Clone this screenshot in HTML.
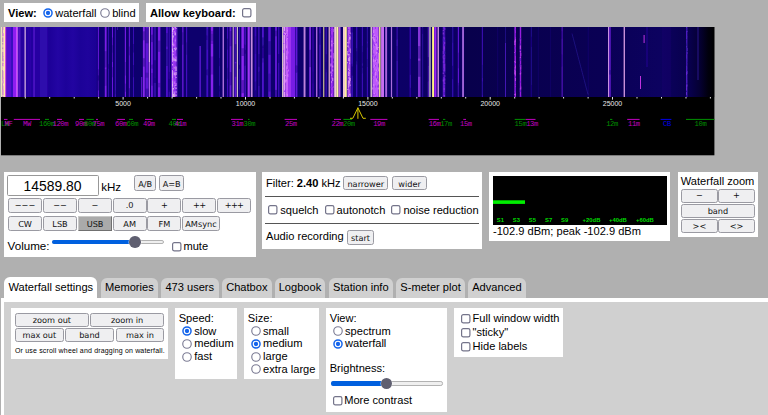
<!DOCTYPE html>
<html><head><meta charset="utf-8"><title>WebSDR</title>
<style>
html,body{margin:0;padding:0;}
body{width:768px;height:415px;overflow:hidden;background:#b0b0b0;font-family:"Liberation Sans",Arial,sans-serif;font-size:11.1px;color:#000;position:relative;}
.a{position:absolute;white-space:nowrap;}
.w{position:absolute;background:#fff;}
.t{position:absolute;white-space:nowrap;line-height:13px;height:13px;}
.btn{position:absolute;box-sizing:border-box;padding-top:0.8px;border:0.7px solid #9a9aa2;border-radius:2.4px;background:#efeff1;font-family:"DejaVu Sans","Liberation Sans",sans-serif;font-size:8.2px;text-rendering:geometricPrecision;color:#111;text-align:center;white-space:nowrap;}
.btn.on{background:#aaaaaa;border-radius:0;border-color:#c8c8c8 #707070 #707070 #c8c8c8;}
.cb{position:absolute;box-sizing:border-box;width:9.2px;height:9.2px;border:0.8px solid #767676;border-radius:1.6px;background:#fff;}
.rb{position:absolute;box-sizing:border-box;width:9.6px;height:9.6px;margin:-0.1px;border:1.05px solid #80808f;border-radius:50%;background:#fff;}
.rb.on{border:1.55px solid #1464eb;}
.rb.on::after{content:"";position:absolute;left:1.0px;top:1.0px;width:4.5px;height:4.5px;border-radius:50%;background:#1464eb;}
.hr{position:absolute;height:1.3px;background:#555;}
.trk{position:absolute;box-sizing:border-box;height:4.4px;border-radius:2.2px;background:#efefef;border:0.7px solid #b2b2b2;}
.trkf{position:absolute;height:4.4px;border-radius:2.2px;background:#0060df;}
.thumb{position:absolute;width:11.6px;height:11.6px;border-radius:50%;background:#5f5f70;box-shadow:0 0 0 0.5px rgba(255,255,255,.7);}
.tab{position:absolute;top:277.5px;height:20px;box-sizing:border-box;background:#d0d0d0;border-radius:6px 6px 0 0;line-height:19.5px;text-align:center;white-space:nowrap;}
.tab.on{background:#fff;top:277px;height:22px;line-height:20.5px;}
svg text.fl{font-family:"Liberation Sans",sans-serif;font-size:7px;fill:#e8e8e8;}
svg text.bl{font-family:"Liberation Mono",monospace;font-size:7.2px;letter-spacing:-0.42px;}
svg text.sm{font-family:"Liberation Sans",sans-serif;font-size:5.9px;font-weight:bold;fill:#00dc00;}
</style></head>
<body>
<!-- top bar -->
<div class="w" style="left:4px;top:3px;width:135px;height:19px"></div>
<div class="t" style="left:8px;top:7px;font-weight:bold">View:</div>
<svg width="10" height="10" viewBox="0 0 10 10" style="position:absolute;left:43.2px;top:8.1px"><circle cx="5" cy="5" r="4.05" fill="#fff" stroke="#1464eb" stroke-width="1.5"/><circle cx="5" cy="5" r="2.15" fill="#1464eb"/></svg>
<div class="t" style="left:55.2px;top:7px">waterfall</div>
<svg width="10" height="10" viewBox="0 0 10 10" style="position:absolute;left:100.0px;top:8.1px"><circle cx="5" cy="5" r="4.25" fill="#fff" stroke="#7c7c94" stroke-width="1.15"/></svg>
<div class="t" style="left:112.2px;top:7px">blind</div>
<div class="w" style="left:145.8px;top:3px;width:110.5px;height:19px"></div>
<div class="t" style="left:150px;top:7px;font-weight:bold">Allow keyboard:</div>
<svg width="10" height="10" viewBox="0 0 10 10" style="position:absolute;left:242.05px;top:8.25px"><rect x="0.6" y="0.6" width="8.3" height="8.3" rx="1.7" fill="#fff" stroke="#74748a" stroke-width="1.2"/></svg>

<svg width="768" height="70" viewBox="0 27 768 70" style="position:absolute;left:0;top:27px">
<defs><linearGradient id="bg" x1="1" x2="714.5" y1="0" y2="0" gradientUnits="userSpaceOnUse">
<stop offset="0.0000" stop-color="#2402a2"/>
<stop offset="0.0477" stop-color="#2402a2"/>
<stop offset="0.0687" stop-color="#1d0199"/>
<stop offset="0.0799" stop-color="#2305a3"/>
<stop offset="0.0911" stop-color="#1d029a"/>
<stop offset="0.1009" stop-color="#2204a1"/>
<stop offset="0.1107" stop-color="#1c0298"/>
<stop offset="0.1219" stop-color="#1f039c"/>
<stop offset="0.1331" stop-color="#1b0195"/>
<stop offset="0.1374" stop-color="#0d006e"/>
<stop offset="0.4191" stop-color="#0d006c"/>
<stop offset="0.5592" stop-color="#0c0066"/>
<stop offset="0.6461" stop-color="#0b0060"/>
<stop offset="0.6517" stop-color="#08004c"/>
<stop offset="0.8395" stop-color="#0a0054"/>
<stop offset="0.9236" stop-color="#0c0260"/>
<stop offset="0.9657" stop-color="#08004c"/>
<stop offset="0.9797" stop-color="#050032"/>
<stop offset="0.9909" stop-color="#01000e"/>
<stop offset="1.0000" stop-color="#000000"/>
</linearGradient><filter id="bl" x="0" y="0" width="1" height="1" filterUnits="objectBoundingBox"><feGaussianBlur stdDeviation="0.42 0.3"/></filter><clipPath id="cp"><rect x="1" y="27" width="713.5" height="70"/></clipPath></defs>
<rect x="1.0" y="27" width="713.5" height="70" fill="url(#bg)"/>
<g clip-path="url(#cp)"><g filter="url(#bl)">
<rect x="-5" y="20" width="6" height="84" fill="#b0b0b0"/>
<rect x="1.0" y="24" width="1.5" height="76" fill="#f0e6be"/>
<rect x="2.5" y="24" width="1.5" height="76" fill="#f0b4c8"/>
<rect x="4.0" y="24" width="1.0" height="76" fill="#fff0a0"/>
<rect x="5.0" y="24" width="1.5" height="76" fill="#c850dc"/>
<rect x="6.5" y="24" width="4.5" height="76" fill="#550fd2"/>
<rect x="11.0" y="24" width="2.0" height="76" fill="#3907be"/>
<rect x="13.0" y="24" width="3.0" height="76" fill="#8e1ef0"/>
<rect x="16.0" y="24" width="1.6" height="76" fill="#c846ff"/>
<rect x="17.6" y="24" width="0.5" height="76" fill="#e096f0"/>
<rect x="18.1" y="24" width="1.4" height="76" fill="#4c07be"/>
<rect x="19.5" y="24" width="1.0" height="76" fill="#721edc"/>
<rect x="20.5" y="24" width="4.0" height="76" fill="#2800a0"/>
<rect x="24.5" y="24" width="1.3" height="76" fill="#d2aadc"/>
<rect x="26.0" y="24" width="7.5" height="76" fill="#23009e"/>
<rect x="27.8" y="24" width="0.6" height="76" fill="#3907b4"/>
<rect x="29.8" y="24" width="0.6" height="76" fill="#3907b4"/>
<rect x="33.5" y="24" width="1.0" height="76" fill="#681edc"/>
<rect x="35.0" y="24" width="13.0" height="76" fill="#2604a2"/>
<rect x="40.0" y="24" width="7.0" height="76" fill="#2f07ac"/>
<rect x="97.9" y="24" width="1.0" height="76" fill="#6816dc"/>
<rect x="104.8" y="24" width="1.8" height="76" fill="#7b1ee6"/>
<rect x="108.0" y="24" width="1.0" height="76" fill="#2f07aa"/>
<rect x="112.0" y="24" width="1.0" height="76" fill="#6816dc"/>
<rect x="114.8" y="24" width="1.0" height="76" fill="#420fbe"/>
<rect x="117.0" y="24" width="0.6" height="6" fill="#5516c8"/>
<rect x="124.8" y="24" width="1.2" height="76" fill="#721ae1"/>
<rect x="128.8" y="24" width="1.2" height="76" fill="#5f16d2"/>
<rect x="133.0" y="24" width="1.0" height="76" fill="#390bb4"/>
<rect x="141.2" y="77" width="1.0" height="23" fill="#681ad7"/>
<rect x="142.9" y="24" width="1.9" height="76" fill="#8525eb"/>
<rect x="145.4" y="24" width="3.1" height="76" fill="#5f12d7"/>
<rect x="148.8" y="24" width="1.2" height="38" fill="#dcaae6"/>
<rect x="148.8" y="62" width="1.2" height="38" fill="#aa64e6"/>
<rect x="151.0" y="24" width="1.9" height="76" fill="#6816d7"/>
<rect x="153.5" y="24" width="2.5" height="76" fill="#2d08a0"/>
<rect x="157.9" y="24" width="2.5" height="76" fill="#7b1ee6"/>
<rect x="166.0" y="24" width="1.9" height="76" fill="#4c0fc8"/>
<rect x="168.5" y="24" width="1.3" height="76" fill="#390bb4"/>
<rect x="171.2" y="24" width="0.8" height="76" fill="#681ad7"/>
<rect x="172.0" y="24" width="4.6" height="76" fill="#9f3af2"/>
<rect x="176.6" y="24" width="0.8" height="76" fill="#681ad7"/>
<rect x="172.0" y="24" width="0.8" height="76" fill="#e1beeb"/>
<rect x="182.2" y="24" width="1.3" height="76" fill="#6816dc"/>
<rect x="186.0" y="24" width="1.2" height="76" fill="#420fbe"/>
<rect x="199.5" y="46" width="1.3" height="54" fill="#5f16d7"/>
<rect x="206.4" y="24" width="1.8" height="76" fill="#420fc3"/>
<rect x="210.8" y="24" width="2.4" height="76" fill="#8521eb"/>
<rect x="219.0" y="24" width="1.0" height="76" fill="#2d0aa5"/>
<rect x="222.6" y="24" width="1.3" height="76" fill="#be78e6"/>
<rect x="227.0" y="24" width="1.2" height="76" fill="#420fbe"/>
<rect x="229.5" y="24" width="1.9" height="76" fill="#6816dc"/>
<rect x="232.6" y="24" width="1.3" height="76" fill="#be96c8"/>
<rect x="234.5" y="24" width="1.9" height="76" fill="#5f16d7"/>
<rect x="236.8" y="24" width="1.2" height="76" fill="#cdb9c3"/>
<rect x="238.8" y="24" width="1.2" height="76" fill="#2f09aa"/>
<rect x="241.4" y="24" width="2.5" height="76" fill="#8e25f0"/>
<rect x="244.5" y="24" width="1.3" height="76" fill="#4c0fc8"/>
<rect x="247.6" y="24" width="2.2" height="76" fill="#a134f5"/>
<rect x="250.8" y="24" width="1.8" height="76" fill="#c88cdc"/>
<rect x="254.5" y="24" width="1.9" height="76" fill="#390bb9"/>
<rect x="258.2" y="24" width="1.3" height="76" fill="#420fbe"/>
<rect x="262.0" y="24" width="1.9" height="76" fill="#4c12c8"/>
<rect x="268.2" y="24" width="2.6" height="76" fill="#5512cd"/>
<rect x="275.0" y="24" width="2.0" height="76" fill="#5f16d2"/>
<rect x="278.0" y="24" width="1.5" height="76" fill="#340aaf"/>
<rect x="282.0" y="24" width="1.3" height="76" fill="#d2beb9"/>
<rect x="283.3" y="24" width="2.2" height="76" fill="#e196fa"/>
<rect x="285.5" y="24" width="2.5" height="76" fill="#c35ffa"/>
<rect x="288.0" y="24" width="3.0" height="76" fill="#9c30f0"/>
<rect x="291.0" y="24" width="4.0" height="76" fill="#761ce4"/>
<rect x="295.5" y="24" width="1.9" height="76" fill="#5f16d7"/>
<rect x="303.6" y="24" width="1.9" height="76" fill="#be82dc"/>
<rect x="309.2" y="24" width="1.8" height="76" fill="#7b29dc"/>
<rect x="312.4" y="24" width="1.2" height="76" fill="#390bb4"/>
<rect x="316.0" y="24" width="1.4" height="76" fill="#aa64dc"/>
<rect x="319.2" y="24" width="1.6" height="76" fill="#420fbe"/>
<rect x="323.2" y="24" width="1.1" height="76" fill="#e1cd96"/>
<rect x="325.5" y="24" width="1.3" height="76" fill="#390bb4"/>
<rect x="328.6" y="24" width="1.3" height="76" fill="#dcaac8"/>
<rect x="330.5" y="24" width="3.1" height="76" fill="#a134f0"/>
<rect x="334.2" y="24" width="2.1" height="76" fill="#f0c8d7"/>
<rect x="336.3" y="24" width="2.2" height="76" fill="#fff8a0"/>
<rect x="338.6" y="24" width="1.9" height="76" fill="#b45ae6"/>
<rect x="343.0" y="24" width="2.0" height="76" fill="#f0c8cd"/>
<rect x="345.0" y="24" width="1.8" height="76" fill="#ffeea0"/>
<rect x="347.4" y="24" width="3.2" height="76" fill="#b450f0"/>
<rect x="351.2" y="24" width="1.8" height="76" fill="#390bb4"/>
<rect x="356.0" y="24" width="1.4" height="76" fill="#390fb4"/>
<rect x="361.8" y="24" width="1.2" height="76" fill="#390db4"/>
<rect x="366.8" y="24" width="1.2" height="76" fill="#390db4"/>
<rect x="370.5" y="24" width="1.5" height="76" fill="#cdb9c3"/>
<rect x="372.4" y="24" width="6.3" height="76" fill="#be5afa"/>
<rect x="379.0" y="24" width="1.6" height="76" fill="#ebd796"/>
<rect x="381.1" y="24" width="2.9" height="76" fill="#c86ef0"/>
<rect x="385.2" y="24" width="1.9" height="76" fill="#aa64dc"/>
<rect x="390.9" y="24" width="1.2" height="76" fill="#aa6edc"/>
<rect x="396.5" y="24" width="1.3" height="76" fill="#420fbe"/>
<rect x="409.6" y="24" width="1.3" height="76" fill="#390bb4"/>
<rect x="418.0" y="24" width="2.5" height="76" fill="#8534d7"/>
<rect x="422.0" y="24" width="1.2" height="76" fill="#280a96"/>
<rect x="427.8" y="24" width="1.0" height="76" fill="#5f1ec8"/>
<rect x="429.0" y="24" width="1.9" height="76" fill="#9b91af"/>
<rect x="432.1" y="24" width="1.9" height="76" fill="#fff582"/>
<rect x="434.2" y="24" width="2.3" height="76" fill="#9825f0"/>
<rect x="437.5" y="24" width="1.5" height="76" fill="#c882dc"/>
<rect x="442.8" y="24" width="2.4" height="76" fill="#681ed2"/>
<rect x="452.0" y="24" width="1.4" height="76" fill="#2f0baa"/>
<rect x="457.8" y="24" width="1.2" height="76" fill="#5f16d2"/>
<rect x="462.1" y="24" width="1.9" height="76" fill="#a064d7"/>
<rect x="481.8" y="24" width="1.1" height="76" fill="#3a0fb6"/>
<rect x="497.4" y="24" width="0.8" height="76" fill="#180670"/>
<rect x="505.0" y="24" width="1.0" height="19" fill="#1e0a80"/>
<rect x="505.0" y="43" width="1.0" height="57" fill="#4212b4"/>
<rect x="514.4" y="24" width="1.6" height="76" fill="#981ee0"/>
<rect x="519.8" y="24" width="1.4" height="76" fill="#981ee0"/>
<rect x="530.8" y="24" width="1.0" height="76" fill="#240e92"/>
<rect x="537.8" y="24" width="0.8" height="76" fill="#16066c"/>
<rect x="550.0" y="24" width="0.8" height="76" fill="#140568"/>
<rect x="561.6" y="24" width="1.1" height="76" fill="#5512c0"/>
<rect x="587.8" y="24" width="0.7" height="76" fill="#180874"/>
<rect x="608.0" y="24" width="1.3" height="76" fill="#c890e0"/>
<rect x="609.3" y="24" width="1.4" height="76" fill="#6418d0"/>
<rect x="623.6" y="24" width="1.4" height="76" fill="#c890d8"/>
<rect x="643.6" y="35" width="1.0" height="8" fill="#c030e0"/>
<rect x="640.0" y="76" width="1.0" height="13" fill="#c030e0"/>
<rect x="646.6" y="24" width="0.8" height="43" fill="#2a10a0"/>
<rect x="662.0" y="24" width="9.0" height="76" fill="#14056c" opacity="0.5"/>
<rect x="686.0" y="24" width="1.4" height="76" fill="#4c1ec0"/>
<rect x="697.6" y="24" width="0.8" height="56" fill="#3018a0"/>
<rect x="97.8" y="75.2" width="1.2" height="15.1" fill="#0e0070" opacity="0.45"/>
<rect x="97.8" y="69.4" width="1.2" height="11.4" fill="#0e0070" opacity="0.35"/>
<rect x="104.7" y="69.2" width="2.0" height="16.6" fill="#0e0070" opacity="0.25"/>
<rect x="104.7" y="51.2" width="2.0" height="16.2" fill="#0e0070" opacity="0.35"/>
<rect x="107.9" y="64.3" width="1.2" height="4.2" fill="#0e0070" opacity="0.25"/>
<rect x="111.9" y="45.2" width="1.2" height="16.8" fill="#0e0070" opacity="0.35"/>
<rect x="111.9" y="37.4" width="1.2" height="15.2" fill="#0e0070" opacity="0.25"/>
<rect x="111.9" y="67.2" width="1.2" height="10.2" fill="#0e0070" opacity="0.25"/>
<rect x="114.7" y="90.2" width="1.2" height="4.1" fill="#0e0070" opacity="0.25"/>
<rect x="124.7" y="83.7" width="1.4" height="8.1" fill="#0e0070" opacity="0.25"/>
<rect x="124.7" y="62.0" width="1.4" height="13.5" fill="#0e0070" opacity="0.25"/>
<rect x="128.7" y="88.2" width="1.4" height="13.7" fill="#0e0070" opacity="0.35"/>
<rect x="128.7" y="46.4" width="1.4" height="9.1" fill="#0e0070" opacity="0.25"/>
<rect x="132.9" y="44.1" width="1.2" height="8.6" fill="#0e0070" opacity="0.45"/>
<rect x="132.9" y="65.1" width="1.2" height="12.3" fill="#0e0070" opacity="0.45"/>
<rect x="142.8" y="31.3" width="2.1" height="9.0" fill="#0e0070" opacity="0.35"/>
<rect x="142.8" y="58.2" width="2.1" height="8.4" fill="#0e0070" opacity="0.35"/>
<rect x="145.3" y="72.8" width="3.3" height="4.8" fill="#0e0070" opacity="0.25"/>
<rect x="145.3" y="88.7" width="3.3" height="9.0" fill="#0e0070" opacity="0.35"/>
<rect x="145.3" y="28.2" width="3.3" height="15.0" fill="#0e0070" opacity="0.35"/>
<rect x="150.9" y="64.6" width="2.1" height="4.1" fill="#0e0070" opacity="0.25"/>
<rect x="150.9" y="73.0" width="2.1" height="12.7" fill="#0e0070" opacity="0.25"/>
<rect x="150.9" y="34.7" width="2.1" height="7.4" fill="#0e0070" opacity="0.35"/>
<rect x="153.4" y="60.3" width="2.7" height="16.5" fill="#0e0070" opacity="0.35"/>
<rect x="153.4" y="77.4" width="2.7" height="5.5" fill="#0e0070" opacity="0.45"/>
<rect x="157.8" y="82.9" width="2.7" height="4.5" fill="#0e0070" opacity="0.25"/>
<rect x="157.8" y="40.6" width="2.7" height="11.2" fill="#0e0070" opacity="0.35"/>
<rect x="165.9" y="49.1" width="2.1" height="16.9" fill="#0e0070" opacity="0.45"/>
<rect x="165.9" y="33.0" width="2.1" height="13.6" fill="#0e0070" opacity="0.35"/>
<rect x="168.4" y="78.9" width="1.5" height="12.8" fill="#0e0070" opacity="0.45"/>
<rect x="168.4" y="71.8" width="1.5" height="18.0" fill="#0e0070" opacity="0.25"/>
<rect x="182.1" y="32.3" width="1.5" height="12.4" fill="#0e0070" opacity="0.35"/>
<rect x="185.9" y="42.4" width="1.4" height="12.3" fill="#0e0070" opacity="0.35"/>
<rect x="206.3" y="69.3" width="2.0" height="6.0" fill="#0e0070" opacity="0.45"/>
<rect x="206.3" y="29.1" width="2.0" height="10.9" fill="#0e0070" opacity="0.25"/>
<rect x="206.3" y="35.5" width="2.0" height="14.2" fill="#0e0070" opacity="0.25"/>
<rect x="210.7" y="33.9" width="2.6" height="10.1" fill="#0e0070" opacity="0.25"/>
<rect x="210.7" y="30.8" width="2.6" height="9.9" fill="#0e0070" opacity="0.25"/>
<rect x="210.7" y="56.5" width="2.6" height="18.0" fill="#0e0070" opacity="0.25"/>
<rect x="218.9" y="89.4" width="1.2" height="13.6" fill="#0e0070" opacity="0.35"/>
<rect x="218.9" y="58.1" width="1.2" height="8.1" fill="#0e0070" opacity="0.35"/>
<rect x="218.9" y="85.6" width="1.2" height="5.6" fill="#0e0070" opacity="0.45"/>
<rect x="226.9" y="67.8" width="1.4" height="11.0" fill="#0e0070" opacity="0.35"/>
<rect x="226.9" y="38.7" width="1.4" height="10.9" fill="#0e0070" opacity="0.45"/>
<rect x="229.4" y="31.1" width="2.1" height="15.1" fill="#0e0070" opacity="0.35"/>
<rect x="229.4" y="72.1" width="2.1" height="13.3" fill="#0e0070" opacity="0.35"/>
<rect x="234.4" y="63.4" width="2.1" height="13.4" fill="#0e0070" opacity="0.35"/>
<rect x="234.4" y="44.2" width="2.1" height="17.7" fill="#0e0070" opacity="0.45"/>
<rect x="238.7" y="89.2" width="1.4" height="8.8" fill="#0e0070" opacity="0.25"/>
<rect x="238.7" y="64.7" width="1.4" height="4.2" fill="#0e0070" opacity="0.45"/>
<rect x="241.3" y="48.2" width="2.7" height="7.8" fill="#0e0070" opacity="0.35"/>
<rect x="241.3" y="80.1" width="2.7" height="13.1" fill="#0e0070" opacity="0.35"/>
<rect x="244.4" y="44.8" width="1.5" height="8.8" fill="#0e0070" opacity="0.35"/>
<rect x="244.4" y="49.8" width="1.5" height="15.8" fill="#0e0070" opacity="0.45"/>
<rect x="254.4" y="90.4" width="2.1" height="17.4" fill="#0e0070" opacity="0.45"/>
<rect x="254.4" y="36.2" width="2.1" height="17.7" fill="#0e0070" opacity="0.25"/>
<rect x="254.4" y="81.4" width="2.1" height="17.1" fill="#0e0070" opacity="0.35"/>
<rect x="258.1" y="71.9" width="1.5" height="14.1" fill="#0e0070" opacity="0.45"/>
<rect x="258.1" y="54.1" width="1.5" height="12.6" fill="#0e0070" opacity="0.45"/>
<rect x="261.9" y="46.7" width="2.1" height="11.7" fill="#0e0070" opacity="0.45"/>
<rect x="261.9" y="44.6" width="2.1" height="17.9" fill="#0e0070" opacity="0.25"/>
<rect x="261.9" y="37.4" width="2.1" height="10.2" fill="#0e0070" opacity="0.45"/>
<rect x="268.1" y="41.2" width="2.8" height="13.6" fill="#0e0070" opacity="0.45"/>
<rect x="268.1" y="73.7" width="2.8" height="17.8" fill="#0e0070" opacity="0.25"/>
<rect x="274.9" y="30.5" width="2.2" height="5.9" fill="#0e0070" opacity="0.35"/>
<rect x="274.9" y="89.9" width="2.2" height="10.8" fill="#0e0070" opacity="0.45"/>
<rect x="277.9" y="54.0" width="1.7" height="8.9" fill="#0e0070" opacity="0.45"/>
<rect x="295.4" y="65.4" width="2.1" height="7.3" fill="#0e0070" opacity="0.35"/>
<rect x="309.1" y="49.8" width="2.0" height="17.3" fill="#0e0070" opacity="0.35"/>
<rect x="312.3" y="71.8" width="1.4" height="11.7" fill="#0e0070" opacity="0.25"/>
<rect x="319.1" y="33.2" width="1.8" height="11.6" fill="#0e0070" opacity="0.35"/>
<rect x="319.1" y="88.8" width="1.8" height="8.1" fill="#0e0070" opacity="0.35"/>
<rect x="325.4" y="54.2" width="1.5" height="15.4" fill="#0e0070" opacity="0.45"/>
<rect x="325.4" y="62.0" width="1.5" height="10.5" fill="#0e0070" opacity="0.25"/>
<rect x="351.1" y="63.7" width="2.0" height="17.4" fill="#0e0070" opacity="0.25"/>
<rect x="351.1" y="66.6" width="2.0" height="8.9" fill="#0e0070" opacity="0.45"/>
<rect x="351.1" y="27.1" width="2.0" height="5.5" fill="#0e0070" opacity="0.45"/>
<rect x="355.9" y="48.2" width="1.6" height="16.3" fill="#0e0070" opacity="0.45"/>
<rect x="355.9" y="51.4" width="1.6" height="10.0" fill="#0e0070" opacity="0.25"/>
<rect x="361.7" y="45.9" width="1.4" height="17.6" fill="#0e0070" opacity="0.35"/>
<rect x="361.7" y="52.0" width="1.4" height="16.0" fill="#0e0070" opacity="0.25"/>
<rect x="361.7" y="65.7" width="1.4" height="7.6" fill="#0e0070" opacity="0.35"/>
<rect x="366.7" y="43.3" width="1.4" height="4.3" fill="#0e0070" opacity="0.35"/>
<rect x="366.7" y="59.0" width="1.4" height="8.0" fill="#0e0070" opacity="0.35"/>
<rect x="366.7" y="28.5" width="1.4" height="13.2" fill="#0e0070" opacity="0.35"/>
<rect x="396.4" y="46.1" width="1.5" height="14.9" fill="#0e0070" opacity="0.35"/>
<rect x="396.4" y="27.9" width="1.5" height="11.5" fill="#0e0070" opacity="0.35"/>
<rect x="409.5" y="87.8" width="1.5" height="14.9" fill="#0e0070" opacity="0.25"/>
<rect x="409.5" y="58.9" width="1.5" height="15.8" fill="#0e0070" opacity="0.45"/>
<rect x="417.9" y="46.1" width="2.7" height="12.5" fill="#0e0070" opacity="0.35"/>
<rect x="417.9" y="60.7" width="2.7" height="16.1" fill="#0e0070" opacity="0.45"/>
<rect x="421.9" y="28.1" width="1.4" height="5.8" fill="#0e0070" opacity="0.35"/>
<rect x="427.7" y="66.9" width="1.2" height="14.2" fill="#0e0070" opacity="0.25"/>
<rect x="427.7" y="57.2" width="1.2" height="9.1" fill="#0e0070" opacity="0.45"/>
<rect x="442.7" y="29.4" width="2.6" height="7.5" fill="#0e0070" opacity="0.35"/>
<rect x="442.7" y="71.6" width="2.6" height="5.5" fill="#0e0070" opacity="0.45"/>
<rect x="451.9" y="27.9" width="1.6" height="14.9" fill="#0e0070" opacity="0.35"/>
<rect x="451.9" y="65.7" width="1.6" height="13.6" fill="#0e0070" opacity="0.45"/>
<rect x="457.7" y="82.8" width="1.4" height="15.8" fill="#0e0070" opacity="0.35"/>
<rect x="457.7" y="52.5" width="1.4" height="15.9" fill="#0e0070" opacity="0.25"/>
<rect x="457.7" y="85.4" width="1.4" height="10.5" fill="#0e0070" opacity="0.25"/>
<rect x="481.7" y="81.4" width="1.3" height="13.7" fill="#0e0070" opacity="0.35"/>
<rect x="481.7" y="64.8" width="1.3" height="13.1" fill="#0e0070" opacity="0.35"/>
<rect x="530.7" y="36.3" width="1.2" height="10.7" fill="#0e0070" opacity="0.45"/>
<rect x="530.7" y="84.8" width="1.2" height="17.6" fill="#0e0070" opacity="0.45"/>
<rect x="561.5" y="54.7" width="1.3" height="11.6" fill="#0e0070" opacity="0.25"/>
<rect x="561.5" y="31.4" width="1.3" height="7.2" fill="#0e0070" opacity="0.25"/>
<rect x="609.2" y="70.1" width="1.6" height="4.4" fill="#0e0070" opacity="0.45"/>
<rect x="685.9" y="90.6" width="1.6" height="18.0" fill="#0e0070" opacity="0.45"/>
<rect x="685.9" y="58.6" width="1.6" height="5.7" fill="#0e0070" opacity="0.25"/>
<rect x="685.9" y="41.3" width="1.6" height="13.0" fill="#0e0070" opacity="0.25"/>
<rect x="2.5" y="33.0" width="0.9" height="1.5" fill="#e18cd7"/>
<rect x="2.5" y="34.5" width="0.9" height="1.5" fill="#e18cd7"/>
<rect x="2.5" y="36.0" width="0.9" height="1.5" fill="#fff0be"/>
<rect x="2.5" y="42.0" width="0.9" height="1.0" fill="#fff0be"/>
<rect x="2.5" y="44.5" width="0.9" height="3.0" fill="#fff0be"/>
<rect x="2.5" y="49.0" width="0.9" height="3.0" fill="#fff0be"/>
<rect x="2.5" y="61.0" width="0.9" height="2.0" fill="#fff0be"/>
<rect x="2.5" y="63.0" width="0.9" height="3.0" fill="#e18cd7"/>
<rect x="2.5" y="66.0" width="0.9" height="3.0" fill="#fff0be"/>
<rect x="2.5" y="69.0" width="0.9" height="1.0" fill="#fff0be"/>
<rect x="2.5" y="77.5" width="0.9" height="2.0" fill="#e18cd7"/>
<rect x="2.5" y="79.5" width="0.9" height="2.0" fill="#e18cd7"/>
<rect x="2.5" y="81.5" width="0.9" height="1.0" fill="#fff0be"/>
<rect x="2.5" y="82.5" width="0.9" height="1.0" fill="#e18cd7"/>
<rect x="2.5" y="89.5" width="0.9" height="3.0" fill="#e18cd7"/>
<rect x="2.5" y="92.5" width="0.9" height="1.5" fill="#e18cd7"/>
<rect x="2.5" y="94.0" width="0.9" height="1.0" fill="#e18cd7"/>
<rect x="2.5" y="95.0" width="0.9" height="1.0" fill="#fff0be"/>
<rect x="3.4" y="30.0" width="0.6" height="3.0" fill="#fff0be"/>
<rect x="3.4" y="34.5" width="0.6" height="1.5" fill="#e18cd7"/>
<rect x="3.4" y="56.0" width="0.6" height="1.0" fill="#e18cd7"/>
<rect x="3.4" y="58.5" width="0.6" height="3.0" fill="#e18cd7"/>
<rect x="3.4" y="63.5" width="0.6" height="1.0" fill="#e18cd7"/>
<rect x="3.4" y="64.5" width="0.6" height="1.0" fill="#fff0be"/>
<rect x="3.4" y="65.5" width="0.6" height="1.0" fill="#e18cd7"/>
<rect x="3.4" y="66.5" width="0.6" height="3.0" fill="#fff0be"/>
<rect x="3.4" y="69.5" width="0.6" height="1.5" fill="#fff0be"/>
<rect x="3.4" y="79.5" width="0.6" height="1.0" fill="#fff0be"/>
<rect x="3.4" y="80.5" width="0.6" height="3.0" fill="#e18cd7"/>
<rect x="3.4" y="83.5" width="0.6" height="2.0" fill="#fff0be"/>
<rect x="172.0" y="29.0" width="0.9" height="3.0" fill="#e4bef0"/>
<rect x="172.0" y="32.0" width="0.9" height="1.0" fill="#cd78fa"/>
<rect x="172.0" y="44.0" width="0.9" height="1.0" fill="#e4bef0"/>
<rect x="172.0" y="45.0" width="0.9" height="3.0" fill="#cd78fa"/>
<rect x="172.0" y="49.0" width="0.9" height="3.0" fill="#e4bef0"/>
<rect x="172.0" y="52.0" width="0.9" height="2.0" fill="#cd78fa"/>
<rect x="172.0" y="60.5" width="0.9" height="1.5" fill="#cd78fa"/>
<rect x="172.0" y="62.0" width="0.9" height="2.0" fill="#7b25e4"/>
<rect x="172.0" y="65.5" width="0.9" height="3.0" fill="#7b25e4"/>
<rect x="172.0" y="68.5" width="0.9" height="1.5" fill="#7b25e4"/>
<rect x="172.0" y="78.0" width="0.9" height="3.0" fill="#cd78fa"/>
<rect x="172.0" y="84.0" width="0.9" height="3.0" fill="#e4bef0"/>
<rect x="172.9" y="28.0" width="0.9" height="2.0" fill="#e4bef0"/>
<rect x="172.9" y="34.0" width="0.9" height="1.5" fill="#7b25e4"/>
<rect x="172.9" y="35.5" width="0.9" height="2.0" fill="#e4bef0"/>
<rect x="172.9" y="40.5" width="0.9" height="1.0" fill="#7b25e4"/>
<rect x="172.9" y="43.5" width="0.9" height="1.5" fill="#cd78fa"/>
<rect x="172.9" y="45.0" width="0.9" height="1.5" fill="#cd78fa"/>
<rect x="172.9" y="46.5" width="0.9" height="3.0" fill="#7b25e4"/>
<rect x="172.9" y="51.0" width="0.9" height="1.0" fill="#cd78fa"/>
<rect x="172.9" y="54.0" width="0.9" height="1.5" fill="#cd78fa"/>
<rect x="172.9" y="55.5" width="0.9" height="1.0" fill="#7b25e4"/>
<rect x="172.9" y="57.5" width="0.9" height="2.0" fill="#cd78fa"/>
<rect x="172.9" y="59.5" width="0.9" height="1.0" fill="#e4bef0"/>
<rect x="172.9" y="70.0" width="0.9" height="1.0" fill="#7b25e4"/>
<rect x="172.9" y="86.0" width="0.9" height="2.0" fill="#7b25e4"/>
<rect x="172.9" y="88.0" width="0.9" height="1.5" fill="#e4bef0"/>
<rect x="172.9" y="94.0" width="0.9" height="3.0" fill="#e4bef0"/>
<rect x="173.8" y="31.0" width="0.9" height="1.5" fill="#cd78fa"/>
<rect x="173.8" y="35.5" width="0.9" height="3.0" fill="#7b25e4"/>
<rect x="173.8" y="38.5" width="0.9" height="3.0" fill="#7b25e4"/>
<rect x="173.8" y="44.5" width="0.9" height="1.0" fill="#cd78fa"/>
<rect x="173.8" y="48.0" width="0.9" height="1.0" fill="#e4bef0"/>
<rect x="173.8" y="49.0" width="0.9" height="1.5" fill="#7b25e4"/>
<rect x="173.8" y="58.0" width="0.9" height="3.0" fill="#cd78fa"/>
<rect x="173.8" y="67.0" width="0.9" height="1.5" fill="#cd78fa"/>
<rect x="173.8" y="72.5" width="0.9" height="1.5" fill="#e4bef0"/>
<rect x="173.8" y="74.0" width="0.9" height="1.0" fill="#e4bef0"/>
<rect x="173.8" y="76.5" width="0.9" height="2.0" fill="#7b25e4"/>
<rect x="173.8" y="81.5" width="0.9" height="1.5" fill="#cd78fa"/>
<rect x="173.8" y="83.0" width="0.9" height="1.0" fill="#cd78fa"/>
<rect x="173.8" y="86.0" width="0.9" height="2.0" fill="#cd78fa"/>
<rect x="173.8" y="91.5" width="0.9" height="3.0" fill="#e4bef0"/>
<rect x="173.8" y="94.5" width="0.9" height="3.0" fill="#e4bef0"/>
<rect x="174.7" y="27.0" width="0.9" height="1.0" fill="#e4bef0"/>
<rect x="174.7" y="32.5" width="0.9" height="3.0" fill="#e4bef0"/>
<rect x="174.7" y="35.5" width="0.9" height="2.0" fill="#7b25e4"/>
<rect x="174.7" y="39.5" width="0.9" height="2.0" fill="#cd78fa"/>
<rect x="174.7" y="49.0" width="0.9" height="1.5" fill="#e4bef0"/>
<rect x="174.7" y="59.0" width="0.9" height="2.0" fill="#e4bef0"/>
<rect x="174.7" y="62.5" width="0.9" height="3.0" fill="#7b25e4"/>
<rect x="174.7" y="69.0" width="0.9" height="1.5" fill="#7b25e4"/>
<rect x="174.7" y="73.5" width="0.9" height="1.0" fill="#cd78fa"/>
<rect x="174.7" y="74.5" width="0.9" height="2.0" fill="#cd78fa"/>
<rect x="174.7" y="79.5" width="0.9" height="1.0" fill="#7b25e4"/>
<rect x="174.7" y="85.0" width="0.9" height="1.0" fill="#e4bef0"/>
<rect x="174.7" y="86.0" width="0.9" height="1.5" fill="#7b25e4"/>
<rect x="174.7" y="88.5" width="0.9" height="3.0" fill="#7b25e4"/>
<rect x="174.7" y="91.5" width="0.9" height="2.0" fill="#7b25e4"/>
<rect x="175.6" y="28.0" width="0.9" height="1.0" fill="#e4bef0"/>
<rect x="175.6" y="47.5" width="0.9" height="2.0" fill="#e4bef0"/>
<rect x="175.6" y="53.5" width="0.9" height="3.0" fill="#7b25e4"/>
<rect x="175.6" y="56.5" width="0.9" height="3.0" fill="#cd78fa"/>
<rect x="175.6" y="59.5" width="0.9" height="2.0" fill="#e4bef0"/>
<rect x="175.6" y="66.5" width="0.9" height="1.5" fill="#e4bef0"/>
<rect x="175.6" y="68.0" width="0.9" height="3.0" fill="#e4bef0"/>
<rect x="175.6" y="71.0" width="0.9" height="1.0" fill="#7b25e4"/>
<rect x="175.6" y="72.0" width="0.9" height="3.0" fill="#e4bef0"/>
<rect x="175.6" y="77.0" width="0.9" height="1.0" fill="#e4bef0"/>
<rect x="175.6" y="83.0" width="0.9" height="3.0" fill="#cd78fa"/>
<rect x="175.6" y="87.5" width="0.9" height="1.5" fill="#e4bef0"/>
<rect x="175.6" y="91.0" width="0.9" height="2.0" fill="#cd78fa"/>
<rect x="175.6" y="94.5" width="0.9" height="1.5" fill="#e4bef0"/>
<rect x="330.5" y="28.0" width="0.9" height="1.0" fill="#7b21e1"/>
<rect x="330.5" y="30.0" width="0.9" height="1.0" fill="#7b21e1"/>
<rect x="330.5" y="35.5" width="0.9" height="2.0" fill="#7b21e1"/>
<rect x="330.5" y="49.5" width="0.9" height="2.0" fill="#d78cf5"/>
<rect x="330.5" y="55.5" width="0.9" height="2.0" fill="#d78cf5"/>
<rect x="330.5" y="63.5" width="0.9" height="3.0" fill="#d78cf5"/>
<rect x="330.5" y="71.5" width="0.9" height="2.0" fill="#d78cf5"/>
<rect x="330.5" y="86.5" width="0.9" height="1.5" fill="#7b21e1"/>
<rect x="331.4" y="27.0" width="0.9" height="1.5" fill="#7b21e1"/>
<rect x="331.4" y="34.5" width="0.9" height="3.0" fill="#7b21e1"/>
<rect x="331.4" y="40.5" width="0.9" height="2.0" fill="#d78cf5"/>
<rect x="331.4" y="43.5" width="0.9" height="3.0" fill="#d78cf5"/>
<rect x="331.4" y="74.5" width="0.9" height="1.5" fill="#d78cf5"/>
<rect x="331.4" y="79.0" width="0.9" height="2.0" fill="#7b21e1"/>
<rect x="331.4" y="81.0" width="0.9" height="2.0" fill="#d78cf5"/>
<rect x="331.4" y="90.0" width="0.9" height="3.0" fill="#7b21e1"/>
<rect x="331.4" y="94.0" width="0.9" height="1.5" fill="#d78cf5"/>
<rect x="332.3" y="65.5" width="0.9" height="2.0" fill="#d78cf5"/>
<rect x="332.3" y="69.5" width="0.9" height="1.0" fill="#d78cf5"/>
<rect x="332.3" y="70.5" width="0.9" height="1.0" fill="#d78cf5"/>
<rect x="332.3" y="71.5" width="0.9" height="1.5" fill="#7b21e1"/>
<rect x="332.3" y="74.0" width="0.9" height="3.0" fill="#7b21e1"/>
<rect x="332.3" y="78.0" width="0.9" height="3.0" fill="#d78cf5"/>
<rect x="332.3" y="81.0" width="0.9" height="3.0" fill="#7b21e1"/>
<rect x="332.3" y="84.0" width="0.9" height="3.0" fill="#7b21e1"/>
<rect x="332.3" y="94.0" width="0.9" height="1.5" fill="#7b21e1"/>
<rect x="333.2" y="29.0" width="0.4" height="3.0" fill="#d78cf5"/>
<rect x="333.2" y="36.5" width="0.4" height="1.5" fill="#7b21e1"/>
<rect x="333.2" y="43.0" width="0.4" height="1.0" fill="#d78cf5"/>
<rect x="333.2" y="53.0" width="0.4" height="3.0" fill="#d78cf5"/>
<rect x="333.2" y="56.0" width="0.4" height="1.0" fill="#d78cf5"/>
<rect x="333.2" y="57.0" width="0.4" height="1.5" fill="#d78cf5"/>
<rect x="333.2" y="61.5" width="0.4" height="1.0" fill="#d78cf5"/>
<rect x="333.2" y="86.5" width="0.4" height="1.0" fill="#d78cf5"/>
<rect x="333.2" y="89.5" width="0.4" height="3.0" fill="#7b21e1"/>
<rect x="333.2" y="96.0" width="0.4" height="1.5" fill="#7b21e1"/>
<rect x="347.4" y="35.5" width="0.9" height="1.5" fill="#7b21e1"/>
<rect x="347.4" y="37.0" width="0.9" height="2.0" fill="#7b21e1"/>
<rect x="347.4" y="42.0" width="0.9" height="1.5" fill="#e1a0f5"/>
<rect x="347.4" y="43.5" width="0.9" height="2.0" fill="#7b21e1"/>
<rect x="347.4" y="45.5" width="0.9" height="1.5" fill="#e1a0f5"/>
<rect x="347.4" y="49.0" width="0.9" height="2.0" fill="#7b21e1"/>
<rect x="347.4" y="51.0" width="0.9" height="1.5" fill="#e1a0f5"/>
<rect x="347.4" y="52.5" width="0.9" height="3.0" fill="#e1a0f5"/>
<rect x="347.4" y="55.5" width="0.9" height="1.5" fill="#7b21e1"/>
<rect x="347.4" y="57.0" width="0.9" height="1.0" fill="#7b21e1"/>
<rect x="347.4" y="58.0" width="0.9" height="3.0" fill="#7b21e1"/>
<rect x="347.4" y="62.0" width="0.9" height="1.5" fill="#e1a0f5"/>
<rect x="347.4" y="63.5" width="0.9" height="2.0" fill="#7b21e1"/>
<rect x="347.4" y="72.0" width="0.9" height="3.0" fill="#7b21e1"/>
<rect x="347.4" y="89.0" width="0.9" height="1.0" fill="#e1a0f5"/>
<rect x="348.3" y="29.0" width="0.9" height="1.0" fill="#7b21e1"/>
<rect x="348.3" y="48.0" width="0.9" height="1.5" fill="#7b21e1"/>
<rect x="348.3" y="51.5" width="0.9" height="1.5" fill="#7b21e1"/>
<rect x="348.3" y="53.0" width="0.9" height="1.0" fill="#7b21e1"/>
<rect x="348.3" y="54.0" width="0.9" height="1.0" fill="#e1a0f5"/>
<rect x="348.3" y="58.0" width="0.9" height="3.0" fill="#e1a0f5"/>
<rect x="348.3" y="61.0" width="0.9" height="1.0" fill="#7b21e1"/>
<rect x="348.3" y="62.0" width="0.9" height="2.0" fill="#7b21e1"/>
<rect x="348.3" y="68.5" width="0.9" height="1.5" fill="#e1a0f5"/>
<rect x="348.3" y="70.0" width="0.9" height="1.5" fill="#7b21e1"/>
<rect x="348.3" y="71.5" width="0.9" height="3.0" fill="#e1a0f5"/>
<rect x="348.3" y="74.5" width="0.9" height="1.5" fill="#e1a0f5"/>
<rect x="348.3" y="76.0" width="0.9" height="1.0" fill="#7b21e1"/>
<rect x="348.3" y="79.0" width="0.9" height="1.5" fill="#7b21e1"/>
<rect x="348.3" y="80.5" width="0.9" height="3.0" fill="#e1a0f5"/>
<rect x="348.3" y="83.5" width="0.9" height="2.0" fill="#e1a0f5"/>
<rect x="348.3" y="85.5" width="0.9" height="2.0" fill="#e1a0f5"/>
<rect x="348.3" y="95.5" width="0.9" height="2.0" fill="#e1a0f5"/>
<rect x="349.2" y="34.0" width="0.9" height="1.0" fill="#7b21e1"/>
<rect x="349.2" y="37.0" width="0.9" height="1.0" fill="#e1a0f5"/>
<rect x="349.2" y="38.0" width="0.9" height="1.5" fill="#e1a0f5"/>
<rect x="349.2" y="43.5" width="0.9" height="3.0" fill="#7b21e1"/>
<rect x="349.2" y="46.5" width="0.9" height="1.0" fill="#7b21e1"/>
<rect x="349.2" y="52.0" width="0.9" height="1.5" fill="#7b21e1"/>
<rect x="349.2" y="57.0" width="0.9" height="1.5" fill="#e1a0f5"/>
<rect x="349.2" y="58.5" width="0.9" height="3.0" fill="#e1a0f5"/>
<rect x="349.2" y="62.5" width="0.9" height="1.5" fill="#e1a0f5"/>
<rect x="349.2" y="70.0" width="0.9" height="1.0" fill="#e1a0f5"/>
<rect x="349.2" y="72.5" width="0.9" height="1.0" fill="#e1a0f5"/>
<rect x="349.2" y="77.5" width="0.9" height="3.0" fill="#e1a0f5"/>
<rect x="349.2" y="80.5" width="0.9" height="3.0" fill="#e1a0f5"/>
<rect x="349.2" y="86.5" width="0.9" height="3.0" fill="#7b21e1"/>
<rect x="349.2" y="94.0" width="0.9" height="1.0" fill="#e1a0f5"/>
<rect x="349.2" y="96.5" width="0.9" height="1.0" fill="#7b21e1"/>
<rect x="350.1" y="27.0" width="0.5" height="1.5" fill="#7b21e1"/>
<rect x="350.1" y="32.5" width="0.5" height="1.5" fill="#e1a0f5"/>
<rect x="350.1" y="36.5" width="0.5" height="2.0" fill="#e1a0f5"/>
<rect x="350.1" y="38.5" width="0.5" height="1.0" fill="#e1a0f5"/>
<rect x="350.1" y="47.5" width="0.5" height="1.0" fill="#7b21e1"/>
<rect x="350.1" y="48.5" width="0.5" height="1.5" fill="#e1a0f5"/>
<rect x="350.1" y="50.0" width="0.5" height="3.0" fill="#e1a0f5"/>
<rect x="350.1" y="62.0" width="0.5" height="3.0" fill="#7b21e1"/>
<rect x="350.1" y="70.0" width="0.5" height="1.5" fill="#7b21e1"/>
<rect x="350.1" y="71.5" width="0.5" height="1.0" fill="#7b21e1"/>
<rect x="350.1" y="74.0" width="0.5" height="1.0" fill="#7b21e1"/>
<rect x="350.1" y="78.0" width="0.5" height="3.0" fill="#e1a0f5"/>
<rect x="350.1" y="84.5" width="0.5" height="1.5" fill="#e1a0f5"/>
<rect x="350.1" y="86.0" width="0.5" height="1.0" fill="#7b21e1"/>
<rect x="350.1" y="91.5" width="0.5" height="2.0" fill="#7b21e1"/>
<rect x="350.1" y="93.5" width="0.5" height="3.0" fill="#e1a0f5"/>
<rect x="372.4" y="33.0" width="0.9" height="2.0" fill="#9830f0"/>
<rect x="372.4" y="37.0" width="0.9" height="1.5" fill="#d782fa"/>
<rect x="372.4" y="48.0" width="0.9" height="2.0" fill="#9830f0"/>
<rect x="372.4" y="55.0" width="0.9" height="2.0" fill="#9830f0"/>
<rect x="372.4" y="72.0" width="0.9" height="2.0" fill="#9830f0"/>
<rect x="372.4" y="78.0" width="0.9" height="1.0" fill="#9830f0"/>
<rect x="372.4" y="87.5" width="0.9" height="2.0" fill="#d782fa"/>
<rect x="373.3" y="30.0" width="0.9" height="3.0" fill="#d782fa"/>
<rect x="373.3" y="37.0" width="0.9" height="1.0" fill="#d782fa"/>
<rect x="373.3" y="38.0" width="0.9" height="2.0" fill="#d782fa"/>
<rect x="373.3" y="41.5" width="0.9" height="3.0" fill="#9830f0"/>
<rect x="373.3" y="53.5" width="0.9" height="1.5" fill="#9830f0"/>
<rect x="373.3" y="59.0" width="0.9" height="3.0" fill="#d782fa"/>
<rect x="373.3" y="68.0" width="0.9" height="2.0" fill="#9830f0"/>
<rect x="373.3" y="70.0" width="0.9" height="3.0" fill="#9830f0"/>
<rect x="373.3" y="73.0" width="0.9" height="3.0" fill="#9830f0"/>
<rect x="373.3" y="84.0" width="0.9" height="2.0" fill="#d782fa"/>
<rect x="373.3" y="94.0" width="0.9" height="1.5" fill="#9830f0"/>
<rect x="374.2" y="34.5" width="0.9" height="1.5" fill="#d782fa"/>
<rect x="374.2" y="36.0" width="0.9" height="1.0" fill="#9830f0"/>
<rect x="374.2" y="39.0" width="0.9" height="3.0" fill="#d782fa"/>
<rect x="374.2" y="44.0" width="0.9" height="2.0" fill="#9830f0"/>
<rect x="374.2" y="56.5" width="0.9" height="3.0" fill="#9830f0"/>
<rect x="374.2" y="65.0" width="0.9" height="1.5" fill="#d782fa"/>
<rect x="374.2" y="68.5" width="0.9" height="1.0" fill="#d782fa"/>
<rect x="374.2" y="71.5" width="0.9" height="1.0" fill="#9830f0"/>
<rect x="374.2" y="93.0" width="0.9" height="1.0" fill="#d782fa"/>
<rect x="375.1" y="27.0" width="0.9" height="2.0" fill="#9830f0"/>
<rect x="375.1" y="44.0" width="0.9" height="1.0" fill="#d782fa"/>
<rect x="375.1" y="55.5" width="0.9" height="2.0" fill="#9830f0"/>
<rect x="375.1" y="60.0" width="0.9" height="1.5" fill="#d782fa"/>
<rect x="375.1" y="65.0" width="0.9" height="1.5" fill="#9830f0"/>
<rect x="375.1" y="72.0" width="0.9" height="1.5" fill="#d782fa"/>
<rect x="375.1" y="73.5" width="0.9" height="2.0" fill="#d782fa"/>
<rect x="375.1" y="85.5" width="0.9" height="1.0" fill="#9830f0"/>
<rect x="375.1" y="86.5" width="0.9" height="1.0" fill="#9830f0"/>
<rect x="375.1" y="93.5" width="0.9" height="1.0" fill="#9830f0"/>
<rect x="376.0" y="37.5" width="0.9" height="2.0" fill="#9830f0"/>
<rect x="376.0" y="41.5" width="0.9" height="2.0" fill="#9830f0"/>
<rect x="376.0" y="43.5" width="0.9" height="3.0" fill="#d782fa"/>
<rect x="376.0" y="46.5" width="0.9" height="3.0" fill="#d782fa"/>
<rect x="376.0" y="52.0" width="0.9" height="2.0" fill="#d782fa"/>
<rect x="376.0" y="60.5" width="0.9" height="1.5" fill="#9830f0"/>
<rect x="376.0" y="69.5" width="0.9" height="1.5" fill="#d782fa"/>
<rect x="376.0" y="75.5" width="0.9" height="3.0" fill="#9830f0"/>
<rect x="376.0" y="78.5" width="0.9" height="3.0" fill="#d782fa"/>
<rect x="376.0" y="96.5" width="0.9" height="3.0" fill="#9830f0"/>
<rect x="376.9" y="36.5" width="0.9" height="3.0" fill="#d782fa"/>
<rect x="376.9" y="47.0" width="0.9" height="3.0" fill="#d782fa"/>
<rect x="376.9" y="50.0" width="0.9" height="2.0" fill="#9830f0"/>
<rect x="376.9" y="53.0" width="0.9" height="3.0" fill="#9830f0"/>
<rect x="376.9" y="56.0" width="0.9" height="3.0" fill="#9830f0"/>
<rect x="376.9" y="69.5" width="0.9" height="1.5" fill="#9830f0"/>
<rect x="376.9" y="78.5" width="0.9" height="1.5" fill="#9830f0"/>
<rect x="376.9" y="85.5" width="0.9" height="2.0" fill="#9830f0"/>
<rect x="377.8" y="37.5" width="0.9" height="1.0" fill="#9830f0"/>
<rect x="377.8" y="42.5" width="0.9" height="1.5" fill="#9830f0"/>
<rect x="377.8" y="44.0" width="0.9" height="1.0" fill="#9830f0"/>
<rect x="377.8" y="47.0" width="0.9" height="1.0" fill="#d782fa"/>
<rect x="377.8" y="51.5" width="0.9" height="1.5" fill="#9830f0"/>
<rect x="377.8" y="53.0" width="0.9" height="3.0" fill="#d782fa"/>
<rect x="377.8" y="56.0" width="0.9" height="3.0" fill="#d782fa"/>
<rect x="377.8" y="59.0" width="0.9" height="3.0" fill="#d782fa"/>
<rect x="377.8" y="62.0" width="0.9" height="1.5" fill="#d782fa"/>
<rect x="377.8" y="67.5" width="0.9" height="1.0" fill="#d782fa"/>
<rect x="377.8" y="68.5" width="0.9" height="3.0" fill="#d782fa"/>
<rect x="377.8" y="71.5" width="0.9" height="3.0" fill="#9830f0"/>
<rect x="377.8" y="75.5" width="0.9" height="2.0" fill="#9830f0"/>
<rect x="377.8" y="81.5" width="0.9" height="3.0" fill="#d782fa"/>
<rect x="377.8" y="87.5" width="0.9" height="2.0" fill="#d782fa"/>
<rect x="283.3" y="27.0" width="0.9" height="1.0" fill="#d77dfa"/>
<rect x="283.3" y="33.0" width="0.9" height="2.0" fill="#9c34f0"/>
<rect x="283.3" y="43.0" width="0.9" height="1.0" fill="#9c34f0"/>
<rect x="283.3" y="50.0" width="0.9" height="3.0" fill="#9c34f0"/>
<rect x="283.3" y="64.5" width="0.9" height="1.0" fill="#d77dfa"/>
<rect x="283.3" y="67.5" width="0.9" height="2.0" fill="#d77dfa"/>
<rect x="283.3" y="72.5" width="0.9" height="3.0" fill="#d77dfa"/>
<rect x="283.3" y="83.5" width="0.9" height="1.0" fill="#d77dfa"/>
<rect x="284.2" y="31.0" width="0.9" height="1.5" fill="#9c34f0"/>
<rect x="284.2" y="34.0" width="0.9" height="1.0" fill="#9c34f0"/>
<rect x="284.2" y="48.5" width="0.9" height="3.0" fill="#d77dfa"/>
<rect x="284.2" y="90.5" width="0.9" height="1.5" fill="#9c34f0"/>
<rect x="285.1" y="33.0" width="0.9" height="2.0" fill="#d77dfa"/>
<rect x="285.1" y="38.5" width="0.9" height="2.0" fill="#9c34f0"/>
<rect x="285.1" y="40.5" width="0.9" height="2.0" fill="#9c34f0"/>
<rect x="285.1" y="42.5" width="0.9" height="1.0" fill="#9c34f0"/>
<rect x="285.1" y="75.0" width="0.9" height="1.0" fill="#d77dfa"/>
<rect x="285.1" y="79.5" width="0.9" height="1.5" fill="#d77dfa"/>
<rect x="285.1" y="81.0" width="0.9" height="1.5" fill="#d77dfa"/>
<rect x="285.1" y="83.5" width="0.9" height="1.5" fill="#9c34f0"/>
<rect x="285.1" y="89.0" width="0.9" height="3.0" fill="#9c34f0"/>
<rect x="285.1" y="93.0" width="0.9" height="1.0" fill="#9c34f0"/>
<rect x="286.0" y="34.0" width="0.9" height="1.0" fill="#9c34f0"/>
<rect x="286.0" y="39.5" width="0.9" height="1.0" fill="#d77dfa"/>
<rect x="286.0" y="45.5" width="0.9" height="3.0" fill="#d77dfa"/>
<rect x="286.0" y="48.5" width="0.9" height="2.0" fill="#9c34f0"/>
<rect x="286.0" y="56.0" width="0.9" height="3.0" fill="#d77dfa"/>
<rect x="286.0" y="63.5" width="0.9" height="2.0" fill="#9c34f0"/>
<rect x="286.0" y="67.5" width="0.9" height="1.0" fill="#d77dfa"/>
<rect x="286.0" y="79.5" width="0.9" height="2.0" fill="#d77dfa"/>
<rect x="286.0" y="93.5" width="0.9" height="1.0" fill="#d77dfa"/>
<rect x="286.9" y="30.0" width="0.9" height="1.5" fill="#d77dfa"/>
<rect x="286.9" y="36.5" width="0.9" height="1.5" fill="#9c34f0"/>
<rect x="286.9" y="38.0" width="0.9" height="1.0" fill="#d77dfa"/>
<rect x="286.9" y="59.5" width="0.9" height="1.0" fill="#9c34f0"/>
<rect x="286.9" y="60.5" width="0.9" height="1.5" fill="#9c34f0"/>
<rect x="286.9" y="69.0" width="0.9" height="1.5" fill="#9c34f0"/>
<rect x="286.9" y="74.5" width="0.9" height="2.0" fill="#d77dfa"/>
<rect x="286.9" y="94.0" width="0.9" height="2.0" fill="#d77dfa"/>
<rect x="287.8" y="38.5" width="0.9" height="3.0" fill="#9c34f0"/>
<rect x="287.8" y="54.5" width="0.9" height="3.0" fill="#9c34f0"/>
<rect x="287.8" y="62.5" width="0.9" height="3.0" fill="#9c34f0"/>
<rect x="287.8" y="69.5" width="0.9" height="2.0" fill="#d77dfa"/>
<rect x="287.8" y="90.0" width="0.9" height="1.5" fill="#9c34f0"/>
<rect x="288.7" y="31.0" width="0.3" height="1.5" fill="#9c34f0"/>
<rect x="288.7" y="51.5" width="0.3" height="2.0" fill="#d77dfa"/>
<rect x="288.7" y="74.0" width="0.3" height="3.0" fill="#d77dfa"/>
<rect x="288.7" y="83.5" width="0.3" height="2.0" fill="#9c34f0"/>
<rect x="288.7" y="92.0" width="0.3" height="1.0" fill="#9c34f0"/>
<rect x="442.8" y="30.0" width="0.9" height="1.0" fill="#8e34e1"/>
<rect x="442.8" y="31.0" width="0.9" height="1.5" fill="#4212b9"/>
<rect x="442.8" y="32.5" width="0.9" height="2.0" fill="#8e34e1"/>
<rect x="442.8" y="38.5" width="0.9" height="3.0" fill="#4212b9"/>
<rect x="442.8" y="42.5" width="0.9" height="1.0" fill="#4212b9"/>
<rect x="442.8" y="51.0" width="0.9" height="3.0" fill="#8e34e1"/>
<rect x="442.8" y="54.0" width="0.9" height="1.5" fill="#4212b9"/>
<rect x="442.8" y="55.5" width="0.9" height="3.0" fill="#8e34e1"/>
<rect x="442.8" y="61.5" width="0.9" height="1.0" fill="#8e34e1"/>
<rect x="442.8" y="68.5" width="0.9" height="1.0" fill="#4212b9"/>
<rect x="442.8" y="72.5" width="0.9" height="1.5" fill="#8e34e1"/>
<rect x="442.8" y="79.5" width="0.9" height="2.0" fill="#8e34e1"/>
<rect x="442.8" y="95.5" width="0.9" height="2.0" fill="#4212b9"/>
<rect x="443.7" y="27.0" width="0.9" height="3.0" fill="#4212b9"/>
<rect x="443.7" y="34.5" width="0.9" height="3.0" fill="#4212b9"/>
<rect x="443.7" y="39.5" width="0.9" height="2.0" fill="#4212b9"/>
<rect x="443.7" y="46.5" width="0.9" height="3.0" fill="#8e34e1"/>
<rect x="443.7" y="51.0" width="0.9" height="3.0" fill="#4212b9"/>
<rect x="443.7" y="56.0" width="0.9" height="2.0" fill="#4212b9"/>
<rect x="443.7" y="63.0" width="0.9" height="1.0" fill="#4212b9"/>
<rect x="443.7" y="84.0" width="0.9" height="1.0" fill="#4212b9"/>
<rect x="443.7" y="88.0" width="0.9" height="2.0" fill="#8e34e1"/>
<rect x="443.7" y="92.0" width="0.9" height="3.0" fill="#4212b9"/>
<rect x="443.7" y="95.0" width="0.9" height="1.5" fill="#8e34e1"/>
<rect x="444.6" y="28.0" width="0.6" height="2.0" fill="#8e34e1"/>
<rect x="444.6" y="40.0" width="0.6" height="2.0" fill="#4212b9"/>
<rect x="444.6" y="42.0" width="0.6" height="2.0" fill="#8e34e1"/>
<rect x="444.6" y="44.0" width="0.6" height="2.0" fill="#4212b9"/>
<rect x="444.6" y="52.0" width="0.6" height="2.0" fill="#4212b9"/>
<rect x="444.6" y="55.5" width="0.6" height="1.0" fill="#8e34e1"/>
<rect x="444.6" y="57.5" width="0.6" height="1.0" fill="#8e34e1"/>
<rect x="444.6" y="63.5" width="0.6" height="3.0" fill="#8e34e1"/>
<rect x="444.6" y="66.5" width="0.6" height="3.0" fill="#8e34e1"/>
<rect x="444.6" y="69.5" width="0.6" height="2.0" fill="#8e34e1"/>
<rect x="444.6" y="71.5" width="0.6" height="2.0" fill="#4212b9"/>
<rect x="444.6" y="75.0" width="0.6" height="2.0" fill="#8e34e1"/>
<rect x="444.6" y="78.5" width="0.6" height="2.0" fill="#8e34e1"/>
<rect x="444.6" y="82.5" width="0.6" height="1.5" fill="#8e34e1"/>
<rect x="514.4" y="29.0" width="0.9" height="1.5" fill="#6812cd"/>
<rect x="514.4" y="40.5" width="0.9" height="3.0" fill="#c34beb"/>
<rect x="514.4" y="43.5" width="0.9" height="1.5" fill="#c34beb"/>
<rect x="514.4" y="47.0" width="0.9" height="2.0" fill="#6812cd"/>
<rect x="514.4" y="52.0" width="0.9" height="1.0" fill="#c34beb"/>
<rect x="514.4" y="61.0" width="0.9" height="1.5" fill="#c34beb"/>
<rect x="514.4" y="62.5" width="0.9" height="3.0" fill="#6812cd"/>
<rect x="514.4" y="67.5" width="0.9" height="1.0" fill="#c34beb"/>
<rect x="514.4" y="68.5" width="0.9" height="1.0" fill="#6812cd"/>
<rect x="514.4" y="69.5" width="0.9" height="2.0" fill="#c34beb"/>
<rect x="514.4" y="71.5" width="0.9" height="1.5" fill="#c34beb"/>
<rect x="514.4" y="73.0" width="0.9" height="1.5" fill="#c34beb"/>
<rect x="514.4" y="91.0" width="0.9" height="1.0" fill="#6812cd"/>
<rect x="514.4" y="94.0" width="0.9" height="1.0" fill="#c34beb"/>
<rect x="515.3" y="33.0" width="0.7" height="3.0" fill="#6812cd"/>
<rect x="515.3" y="36.0" width="0.7" height="1.0" fill="#6812cd"/>
<rect x="515.3" y="39.0" width="0.7" height="3.0" fill="#c34beb"/>
<rect x="515.3" y="52.0" width="0.7" height="1.0" fill="#6812cd"/>
<rect x="515.3" y="53.0" width="0.7" height="3.0" fill="#6812cd"/>
<rect x="515.3" y="62.0" width="0.7" height="1.0" fill="#c34beb"/>
<rect x="515.3" y="65.5" width="0.7" height="3.0" fill="#c34beb"/>
<rect x="515.3" y="71.0" width="0.7" height="1.5" fill="#c34beb"/>
<rect x="515.3" y="72.5" width="0.7" height="3.0" fill="#c34beb"/>
<rect x="515.3" y="76.5" width="0.7" height="1.5" fill="#6812cd"/>
<rect x="515.3" y="78.0" width="0.7" height="3.0" fill="#c34beb"/>
<rect x="515.3" y="81.0" width="0.7" height="3.0" fill="#6812cd"/>
<rect x="515.3" y="85.0" width="0.7" height="1.0" fill="#6812cd"/>
<rect x="515.3" y="87.0" width="0.7" height="3.0" fill="#6812cd"/>
<rect x="515.3" y="90.0" width="0.7" height="1.5" fill="#6812cd"/>
<rect x="515.3" y="92.5" width="0.7" height="1.0" fill="#6812cd"/>
<rect x="515.3" y="93.5" width="0.7" height="2.0" fill="#c34beb"/>
<rect x="519.8" y="38.0" width="0.9" height="1.5" fill="#5f12c3"/>
<rect x="519.8" y="39.5" width="0.9" height="1.0" fill="#c34beb"/>
<rect x="519.8" y="43.5" width="0.9" height="2.0" fill="#5f12c3"/>
<rect x="519.8" y="45.5" width="0.9" height="1.5" fill="#c34beb"/>
<rect x="519.8" y="47.0" width="0.9" height="2.0" fill="#c34beb"/>
<rect x="519.8" y="49.0" width="0.9" height="2.0" fill="#5f12c3"/>
<rect x="519.8" y="51.0" width="0.9" height="1.0" fill="#c34beb"/>
<rect x="519.8" y="57.0" width="0.9" height="1.0" fill="#c34beb"/>
<rect x="519.8" y="58.0" width="0.9" height="3.0" fill="#5f12c3"/>
<rect x="519.8" y="64.0" width="0.9" height="3.0" fill="#5f12c3"/>
<rect x="519.8" y="73.0" width="0.9" height="1.5" fill="#c34beb"/>
<rect x="519.8" y="81.5" width="0.9" height="1.0" fill="#5f12c3"/>
<rect x="519.8" y="88.5" width="0.9" height="1.0" fill="#c34beb"/>
<rect x="519.8" y="89.5" width="0.9" height="1.0" fill="#5f12c3"/>
<rect x="519.8" y="90.5" width="0.9" height="1.5" fill="#5f12c3"/>
<rect x="519.8" y="96.5" width="0.9" height="2.0" fill="#5f12c3"/>
<rect x="520.7" y="38.5" width="0.5" height="2.0" fill="#5f12c3"/>
<rect x="520.7" y="53.0" width="0.5" height="3.0" fill="#c34beb"/>
<rect x="520.7" y="65.0" width="0.5" height="3.0" fill="#c34beb"/>
<rect x="520.7" y="68.0" width="0.5" height="1.5" fill="#c34beb"/>
<rect x="520.7" y="69.5" width="0.5" height="1.5" fill="#5f12c3"/>
<rect x="520.7" y="72.5" width="0.5" height="1.0" fill="#c34beb"/>
<rect x="520.7" y="86.5" width="0.5" height="3.0" fill="#c34beb"/>
<rect x="520.7" y="95.5" width="0.5" height="2.0" fill="#5f12c3"/>
<rect x="686.0" y="28.0" width="0.9" height="1.5" fill="#2d149b"/>
<rect x="686.0" y="29.5" width="0.9" height="1.5" fill="#2d149b"/>
<rect x="686.0" y="39.0" width="0.9" height="1.5" fill="#2d149b"/>
<rect x="686.0" y="43.5" width="0.9" height="3.0" fill="#2d149b"/>
<rect x="686.0" y="46.5" width="0.9" height="1.0" fill="#6329d2"/>
<rect x="686.0" y="47.5" width="0.9" height="1.5" fill="#2d149b"/>
<rect x="686.0" y="49.0" width="0.9" height="3.0" fill="#2d149b"/>
<rect x="686.0" y="64.5" width="0.9" height="1.0" fill="#2d149b"/>
<rect x="686.0" y="72.0" width="0.9" height="3.0" fill="#6329d2"/>
<rect x="686.0" y="83.5" width="0.9" height="1.0" fill="#2d149b"/>
<rect x="686.0" y="84.5" width="0.9" height="3.0" fill="#6329d2"/>
<rect x="686.0" y="87.5" width="0.9" height="3.0" fill="#6329d2"/>
<rect x="686.0" y="92.0" width="0.9" height="3.0" fill="#6329d2"/>
<rect x="686.9" y="31.0" width="0.5" height="1.0" fill="#6329d2"/>
<rect x="686.9" y="36.0" width="0.5" height="1.5" fill="#2d149b"/>
<rect x="686.9" y="48.0" width="0.5" height="3.0" fill="#6329d2"/>
<rect x="686.9" y="52.0" width="0.5" height="2.0" fill="#6329d2"/>
<rect x="686.9" y="54.0" width="0.5" height="3.0" fill="#2d149b"/>
<rect x="686.9" y="57.0" width="0.5" height="2.0" fill="#2d149b"/>
<rect x="686.9" y="59.0" width="0.5" height="3.0" fill="#2d149b"/>
<rect x="686.9" y="63.0" width="0.5" height="1.5" fill="#2d149b"/>
<rect x="686.9" y="67.5" width="0.5" height="1.0" fill="#2d149b"/>
<rect x="686.9" y="71.0" width="0.5" height="3.0" fill="#6329d2"/>
<rect x="686.9" y="80.0" width="0.5" height="3.0" fill="#2d149b"/>
<rect x="686.9" y="84.5" width="0.5" height="2.0" fill="#6329d2"/>
<rect x="686.9" y="90.5" width="0.5" height="2.0" fill="#2d149b"/>
<rect x="686.9" y="94.5" width="0.5" height="3.0" fill="#2d149b"/>
<line x1="572" y1="33.5" x2="588" y2="94.5" stroke="#3224b0" stroke-width="0.6" opacity="0.75"/>
</g></g></svg>
<svg width="768" height="59" viewBox="0 97 768 59" style="position:absolute;left:0;top:97px">
<rect x="1" y="97" width="713.4" height="58.3" fill="#000"/>
<rect x="24.8" y="97" width="1" height="1.5" fill="#e0e0e0"/>
<rect x="49.2" y="97" width="1" height="1.5" fill="#e0e0e0"/>
<rect x="73.7" y="97" width="1" height="1.5" fill="#e0e0e0"/>
<rect x="98.2" y="97" width="1" height="1.5" fill="#e0e0e0"/>
<rect x="122.6" y="97" width="1" height="2.6" fill="#e0e0e0"/>
<rect x="147.1" y="97" width="1" height="1.5" fill="#e0e0e0"/>
<rect x="171.6" y="97" width="1" height="1.5" fill="#e0e0e0"/>
<rect x="196.1" y="97" width="1" height="1.5" fill="#e0e0e0"/>
<rect x="220.5" y="97" width="1" height="1.5" fill="#e0e0e0"/>
<rect x="245.0" y="97" width="1" height="2.6" fill="#e0e0e0"/>
<rect x="269.5" y="97" width="1" height="1.5" fill="#e0e0e0"/>
<rect x="293.9" y="97" width="1" height="1.5" fill="#e0e0e0"/>
<rect x="318.4" y="97" width="1" height="1.5" fill="#e0e0e0"/>
<rect x="342.9" y="97" width="1" height="1.5" fill="#e0e0e0"/>
<rect x="367.4" y="97" width="1" height="2.6" fill="#e0e0e0"/>
<rect x="391.8" y="97" width="1" height="1.5" fill="#e0e0e0"/>
<rect x="416.3" y="97" width="1" height="1.5" fill="#e0e0e0"/>
<rect x="440.8" y="97" width="1" height="1.5" fill="#e0e0e0"/>
<rect x="465.2" y="97" width="1" height="1.5" fill="#e0e0e0"/>
<rect x="489.7" y="97" width="1" height="2.6" fill="#e0e0e0"/>
<rect x="514.2" y="97" width="1" height="1.5" fill="#e0e0e0"/>
<rect x="538.6" y="97" width="1" height="1.5" fill="#e0e0e0"/>
<rect x="563.1" y="97" width="1" height="1.5" fill="#e0e0e0"/>
<rect x="587.6" y="97" width="1" height="1.5" fill="#e0e0e0"/>
<rect x="612.0" y="97" width="1" height="2.6" fill="#e0e0e0"/>
<rect x="636.5" y="97" width="1" height="1.5" fill="#e0e0e0"/>
<rect x="661.0" y="97" width="1" height="1.5" fill="#e0e0e0"/>
<rect x="685.5" y="97" width="1" height="1.5" fill="#e0e0e0"/>
<rect x="709.9" y="97" width="1" height="1.5" fill="#e0e0e0"/>
<text x="123.1" y="106" text-anchor="middle" class="fl">5000</text>
<text x="245.5" y="106" text-anchor="middle" class="fl">10000</text>
<text x="367.9" y="106" text-anchor="middle" class="fl">15000</text>
<text x="490.2" y="106" text-anchor="middle" class="fl">20000</text>
<text x="612.5" y="106" text-anchor="middle" class="fl">25000</text>
<text x="1.0" y="125.6" class="bl" fill="#009000">LW</text>
<rect x="4.0" y="118.9" width="3.5" height="1" fill="#c000c0"/>
<text x="4.5" y="125.6" class="bl" fill="#c000c0">MF</text>
<rect x="13.8" y="118.9" width="26.2" height="1" fill="#c000c0"/>
<text x="23.0" y="125.6" class="bl" fill="#c000c0">MW</text>
<rect x="45.0" y="118.9" width="4.0" height="1" fill="#009000"/>
<text x="39.0" y="125.6" class="bl" fill="#009000">160m</text>
<rect x="57.0" y="118.9" width="5.0" height="1" fill="#c000c0"/>
<text x="52.5" y="125.6" class="bl" fill="#c000c0">120m</text>
<rect x="79.0" y="118.9" width="5.0" height="1" fill="#c000c0"/>
<text x="75.0" y="125.6" class="bl" fill="#c000c0">90m</text>
<rect x="86.4" y="118.9" width="7.4" height="1" fill="#009000"/>
<text x="84.0" y="125.6" class="bl" fill="#009000">80m</text>
<rect x="96.0" y="118.9" width="2.0" height="1" fill="#c000c0"/>
<text x="92.5" y="125.6" class="bl" fill="#c000c0">75m</text>
<rect x="117.3" y="118.9" width="7.7" height="1" fill="#c000c0"/>
<text x="115.0" y="125.6" class="bl" fill="#c000c0">60m</text>
<rect x="129.0" y="118.9" width="4.0" height="1" fill="#009000"/>
<text x="126.5" y="125.6" class="bl" fill="#009000">60m</text>
<rect x="145.0" y="118.9" width="7.5" height="1" fill="#c000c0"/>
<text x="143.0" y="125.6" class="bl" fill="#c000c0">49m</text>
<rect x="172.0" y="118.9" width="4.0" height="1" fill="#009000"/>
<text x="168.5" y="125.6" class="bl" fill="#009000">40m</text>
<rect x="177.0" y="118.9" width="6.0" height="1" fill="#c000c0"/>
<text x="174.5" y="125.6" class="bl" fill="#c000c0">41m</text>
<rect x="231.0" y="118.9" width="12.0" height="1" fill="#c000c0"/>
<text x="231.5" y="125.6" class="bl" fill="#c000c0">31m</text>
<rect x="248.0" y="118.9" width="1.5" height="1" fill="#009000"/>
<text x="243.5" y="125.6" class="bl" fill="#009000">30m</text>
<rect x="284.6" y="118.9" width="12.4" height="1" fill="#c000c0"/>
<text x="285.0" y="125.6" class="bl" fill="#c000c0">25m</text>
<rect x="334.0" y="118.9" width="7.0" height="1" fill="#c000c0"/>
<text x="331.5" y="125.6" class="bl" fill="#c000c0">22m</text>
<rect x="343.4" y="118.9" width="8.6" height="1" fill="#009000"/>
<text x="343.0" y="125.6" class="bl" fill="#009000">20m</text>
<rect x="370.3" y="118.9" width="17.1" height="1" fill="#c000c0"/>
<text x="373.2" y="125.6" class="bl" fill="#c000c0">19m</text>
<rect x="428.6" y="118.9" width="10.4" height="1" fill="#c000c0"/>
<text x="428.7" y="125.6" class="bl" fill="#c000c0">16m</text>
<rect x="443.0" y="118.9" width="2.3" height="1" fill="#009000"/>
<text x="440.2" y="125.6" class="bl" fill="#009000">17m</text>
<rect x="463.3" y="118.9" width="2.7" height="1" fill="#c000c0"/>
<text x="460.0" y="125.6" class="bl" fill="#c000c0">15m</text>
<rect x="514.7" y="118.9" width="11.0" height="1" fill="#009000"/>
<text x="514.6" y="125.6" class="bl" fill="#009000">15m</text>
<rect x="525.7" y="118.9" width="9.8" height="1" fill="#c000c0"/>
<text x="526.2" y="125.6" class="bl" fill="#c000c0">13m</text>
<rect x="610.0" y="118.9" width="2.3" height="1" fill="#009000"/>
<text x="606.2" y="125.6" class="bl" fill="#009000">12m</text>
<rect x="627.2" y="118.9" width="12.4" height="1" fill="#c000c0"/>
<text x="628.0" y="125.6" class="bl" fill="#c000c0">11m</text>
<rect x="660.6" y="118.9" width="10.8" height="1" fill="#0000e8"/>
<text x="663.0" y="125.6" class="bl" fill="#0000e8">CB</text>
<rect x="686.0" y="118.9" width="28.4" height="1" fill="#009000"/>
<text x="694.6" y="125.6" class="bl" fill="#009000">10m</text>
<path d="M350 118.3 H352.8 L357.9 107.8 L363 118.3 H365.8" fill="none" stroke="#d8c800" stroke-width="1"/>
<rect x="357.4" y="107.6" width="1" height="11.2" fill="#d8c800"/>
</svg>

<!-- frequency panel -->
<div class="w" style="left:4px;top:171.8px;width:251.6px;height:85.6px"></div>
<div class="a" style="left:7.4px;top:175.3px;width:91.3px;height:20.8px;box-sizing:border-box;border:0.8px solid #989898;border-radius:1.6px;background:#fff;font-size:13.9px;line-height:20px;text-align:center;"><span style="position:relative;left:-0.5px">14589.80</span></div>
<div class="t" style="left:101.2px;top:180px;font-size:11.6px">kHz</div>
<div class="btn" style="left:134.2px;top:175.2px;width:22px;height:15.7px;line-height:13.6px;padding-top:1.4px">A/B</div>
<div class="btn" style="left:159.4px;top:175.2px;width:24.6px;height:15.7px;line-height:13.6px;padding-top:1.4px">A=B</div>
<div class="btn" style="left:8px;top:198.4px;width:34.1px;height:14.3px;line-height:12.3px;padding-top:0">−−−</div>
<div class="btn" style="left:43px;top:198.4px;width:34.1px;height:14.3px;line-height:12.3px;padding-top:0">−−</div>
<div class="btn" style="left:78px;top:198.4px;width:34.1px;height:14.3px;line-height:12.3px;padding-top:0">−</div>
<div class="btn" style="left:112.6px;top:198.4px;width:34.1px;height:14.3px;line-height:12.3px;padding-top:0">.0</div>
<div class="btn" style="left:147.4px;top:198.4px;width:34.1px;height:14.3px;line-height:12.3px;padding-top:0">+</div>
<div class="btn" style="left:182.2px;letter-spacing:-0.7px;top:198.4px;width:34.1px;height:14.3px;line-height:12.3px;padding-top:0">++</div>
<div class="btn" style="left:217px;letter-spacing:-0.7px;top:198.4px;width:34.1px;height:14.3px;line-height:12.3px;padding-top:0">+++</div>
<div class="btn" style="left:8px;top:216.2px;width:34.1px;height:14.4px;line-height:12.8px">CW</div>
<div class="btn" style="left:43px;top:216.2px;width:34.1px;height:14.4px;line-height:12.8px">LSB</div>
<div class="btn on" style="left:78px;top:216.2px;width:34.1px;height:14.4px;line-height:12.8px">USB</div>
<div class="btn" style="left:112.6px;top:216.2px;width:34.1px;height:14.4px;line-height:12.8px">AM</div>
<div class="btn" style="left:147.4px;top:216.2px;width:34.1px;height:14.4px;line-height:12.8px">FM</div>
<div class="btn" style="left:182.2px;top:216.2px;width:37.6px;height:14.4px;line-height:12.8px">AMsync</div>
<div class="t" style="left:7.6px;top:239.4px;font-size:11.6px">Volume:</div>
<div class="trk" style="left:52px;top:240px;width:112px"></div>
<div class="trkf" style="left:52px;top:240px;width:83px"></div>
<div class="thumb" style="left:129.2px;top:236.3px"></div>
<svg width="10" height="10" viewBox="0 0 10 10" style="position:absolute;left:171.65px;top:242.25px"><rect x="0.6" y="0.6" width="8.3" height="8.3" rx="1.7" fill="#fff" stroke="#74748a" stroke-width="1.2"/></svg>
<div class="t" style="left:183.4px;top:240.2px">mute</div>

<!-- filter panel -->
<div class="w" style="left:262px;top:171.8px;width:220.2px;height:76.8px"></div>
<div class="t" style="left:266px;top:177.2px">Filter: <b>2.40</b> kHz</div>
<div class="btn" style="left:343.3px;top:175.8px;width:45px;height:14.6px;line-height:13px;padding-top:0.8px">narrower</div>
<div class="btn" style="left:392.2px;top:175.8px;width:34.8px;height:14.6px;line-height:13px;padding-top:0.8px">wider</div>
<div class="hr" style="left:265.4px;top:196.2px;width:213.8px"></div>
<svg width="10" height="10" viewBox="0 0 10 10" style="position:absolute;left:268.25px;top:205.45px"><rect x="0.6" y="0.6" width="8.3" height="8.3" rx="1.7" fill="#fff" stroke="#74748a" stroke-width="1.2"/></svg>
<div class="t" style="left:280.3px;top:203.6px">squelch</div>
<svg width="10" height="10" viewBox="0 0 10 10" style="position:absolute;left:324.85px;top:205.45px"><rect x="0.6" y="0.6" width="8.3" height="8.3" rx="1.7" fill="#fff" stroke="#74748a" stroke-width="1.2"/></svg>
<div class="t" style="left:336.6px;top:203.6px">autonotch</div>
<svg width="10" height="10" viewBox="0 0 10 10" style="position:absolute;left:391.25px;top:205.45px"><rect x="0.6" y="0.6" width="8.3" height="8.3" rx="1.7" fill="#fff" stroke="#74748a" stroke-width="1.2"/></svg>
<div class="t" style="left:403.4px;top:203.6px">noise reduction</div>
<div class="hr" style="left:265.4px;top:223.2px;width:213.8px"></div>
<div class="t" style="left:266px;top:230.4px">Audio recording</div>
<div class="btn" style="left:347.2px;top:230px;width:26.6px;height:14.8px;line-height:13.2px;padding-top:0.8px">start</div>

<!-- s-meter panel -->
<div class="w" style="left:489.2px;top:171.8px;width:181.2px;height:69.6px"></div>
<svg width="174.2" height="49" viewBox="0 0 174.2 49" style="position:absolute;left:493px;top:175.8px">
<rect width="174.2" height="49" fill="#000"/>
<rect x="0" y="24.3" width="32" height="3.6" fill="#00ee00"/>
<text class="sm" x="3.8" y="45.9">S1</text><text class="sm" x="19.8" y="45.9">S3</text><text class="sm" x="35.8" y="45.9">S5</text><text class="sm" x="52" y="45.9">S7</text><text class="sm" x="68" y="45.9">S9</text>
<text class="sm" x="89.6" y="45.9">+20dB</text><text class="sm" x="116" y="45.9">+40dB</text><text class="sm" x="143" y="45.9">+60dB</text>
</svg>
<div class="t" style="left:493px;top:225.2px">-102.9 dBm; peak -102.9 dBm</div>

<!-- waterfall zoom panel -->
<div class="w" style="left:677.5px;top:171.8px;width:80.6px;height:65.2px"></div>
<div class="t" style="left:680.8px;top:174.6px">Waterfall zoom</div>
<div class="btn" style="left:681.2px;top:188.8px;width:36.4px;height:14px;line-height:11.2px;padding-top:0">−</div>
<div class="btn" style="left:718.3px;top:188.8px;width:36.4px;height:14px;line-height:11.2px;padding-top:0">+</div>
<div class="btn" style="left:681.2px;top:203.7px;width:73.5px;height:14px;line-height:12.4px">band</div>
<div class="btn" style="left:681.2px;top:218.6px;width:36.4px;height:14px;line-height:12.4px">&gt;&lt;</div>
<div class="btn" style="left:718.3px;top:218.6px;width:36.4px;height:14px;line-height:12.4px">&lt;&gt;</div>

<!-- tabs -->
<div class="tab on" style="left:4.2px;width:93.3px">Waterfall settings</div>
<div class="tab" style="left:100.8px;width:57.2px">Memories</div>
<div class="tab" style="left:160.8px;width:57.9px">473 users</div>
<div class="tab" style="left:221.7px;width:50.3px">Chatbox</div>
<div class="tab" style="left:274.7px;width:50.6px">Logbook</div>
<div class="tab" style="left:328.7px;width:64.3px">Station info</div>
<div class="tab" style="left:395.8px;width:69.5px">S-meter plot</div>
<div class="tab" style="left:468px;width:57.8px">Advanced</div>

<!-- bottom panel -->
<div class="a" style="left:1px;top:297.6px;width:767px;height:118px;background:#fff"></div>
<div class="a" style="left:4.2px;top:301.8px;width:764px;height:114px;background:#d0d0d0"></div>
<div class="a" style="left:4.2px;top:297.6px;width:93.3px;height:4.3px;background:#fff"></div>

<div class="w" style="left:11.2px;top:308.4px;width:156.8px;height:50.2px"></div>
<div class="btn" style="left:14.7px;top:312.5px;width:74.5px;height:14.3px;line-height:12.7px">zoom out</div>
<div class="btn" style="left:90px;top:312.5px;width:74.2px;height:14.3px;line-height:12.7px">zoom in</div>
<div class="btn" style="left:14.9px;top:328px;width:48.9px;height:14.3px;line-height:12.3px;padding-top:0">max out</div>
<div class="btn" style="left:64.7px;top:328px;width:49.6px;height:14.3px;line-height:12.3px;padding-top:0">band</div>
<div class="btn" style="left:115.6px;top:328px;width:48.6px;height:14.3px;line-height:12.3px;padding-top:0">max in</div>
<div class="a" style="left:15px;top:346px;font-size:7px;line-height:9px;letter-spacing:0.17px">Or use scroll wheel and dragging on waterfall.</div>

<div class="w" style="left:175px;top:308.4px;width:62px;height:70.2px"></div>
<div class="t" style="left:178.7px;top:312px">Speed:</div>
<svg width="10" height="10" viewBox="0 0 10 10" style="position:absolute;left:181.7px;top:326.3px"><circle cx="5" cy="5" r="4.05" fill="#fff" stroke="#1464eb" stroke-width="1.5"/><circle cx="5" cy="5" r="2.15" fill="#1464eb"/></svg><div class="t" style="left:194.2px;top:325.2px">slow</div>
<svg width="10" height="10" viewBox="0 0 10 10" style="position:absolute;left:181.7px;top:338.9px"><circle cx="5" cy="5" r="4.25" fill="#fff" stroke="#7c7c94" stroke-width="1.15"/></svg><div class="t" style="left:194.2px;top:337px">medium</div>
<svg width="10" height="10" viewBox="0 0 10 10" style="position:absolute;left:181.7px;top:351.5px"><circle cx="5" cy="5" r="4.25" fill="#fff" stroke="#7c7c94" stroke-width="1.15"/></svg><div class="t" style="left:194.2px;top:349.8px">fast</div>

<div class="w" style="left:243.8px;top:308.4px;width:75.4px;height:70.6px"></div>
<div class="t" style="left:247.8px;top:312px">Size:</div>
<svg width="10" height="10" viewBox="0 0 10 10" style="position:absolute;left:250.7px;top:326.3px"><circle cx="5" cy="5" r="4.25" fill="#fff" stroke="#7c7c94" stroke-width="1.15"/></svg><div class="t" style="left:263px;top:325.2px">small</div>
<svg width="10" height="10" viewBox="0 0 10 10" style="position:absolute;left:250.7px;top:338.9px"><circle cx="5" cy="5" r="4.05" fill="#fff" stroke="#1464eb" stroke-width="1.5"/><circle cx="5" cy="5" r="2.15" fill="#1464eb"/></svg><div class="t" style="left:263px;top:337px">medium</div>
<svg width="10" height="10" viewBox="0 0 10 10" style="position:absolute;left:250.7px;top:351.5px"><circle cx="5" cy="5" r="4.25" fill="#fff" stroke="#7c7c94" stroke-width="1.15"/></svg><div class="t" style="left:263px;top:349.8px">large</div>
<svg width="10" height="10" viewBox="0 0 10 10" style="position:absolute;left:250.7px;top:364.3px"><circle cx="5" cy="5" r="4.25" fill="#fff" stroke="#7c7c94" stroke-width="1.15"/></svg><div class="t" style="left:263px;top:362.6px">extra large</div>

<div class="w" style="left:325.8px;top:308.4px;width:121.7px;height:103.2px"></div>
<div class="t" style="left:329.7px;top:312px">View:</div>
<svg width="10" height="10" viewBox="0 0 10 10" style="position:absolute;left:332.9px;top:326.3px"><circle cx="5" cy="5" r="4.25" fill="#fff" stroke="#7c7c94" stroke-width="1.15"/></svg><div class="t" style="left:345px;top:325.2px">spectrum</div>
<svg width="10" height="10" viewBox="0 0 10 10" style="position:absolute;left:332.9px;top:338.9px"><circle cx="5" cy="5" r="4.05" fill="#fff" stroke="#1464eb" stroke-width="1.5"/><circle cx="5" cy="5" r="2.15" fill="#1464eb"/></svg><div class="t" style="left:345px;top:337px">waterfall</div>
<div class="t" style="left:329.7px;top:362px">Brightness:</div>
<div class="trk" style="left:330.8px;top:381.4px;width:112.2px"></div>
<div class="trkf" style="left:330.8px;top:381.4px;width:56px"></div>
<div class="thumb" style="left:380.9px;top:377.7px"></div>
<svg width="10" height="10" viewBox="0 0 10 10" style="position:absolute;left:332.85px;top:396.15px"><rect x="0.6" y="0.6" width="8.3" height="8.3" rx="1.7" fill="#fff" stroke="#74748a" stroke-width="1.2"/></svg><div class="t" style="left:344.2px;top:394px">More contrast</div>

<div class="w" style="left:454.2px;top:308.4px;width:108.8px;height:48.4px"></div>
<svg width="10" height="10" viewBox="0 0 10 10" style="position:absolute;left:460.65px;top:313.85px"><rect x="0.6" y="0.6" width="8.3" height="8.3" rx="1.7" fill="#fff" stroke="#74748a" stroke-width="1.2"/></svg><div class="t" style="left:472.5px;top:312.2px">Full window width</div>
<svg width="10" height="10" viewBox="0 0 10 10" style="position:absolute;left:460.65px;top:327.85px"><rect x="0.6" y="0.6" width="8.3" height="8.3" rx="1.7" fill="#fff" stroke="#74748a" stroke-width="1.2"/></svg><div class="t" style="left:472.5px;top:326.2px">"sticky"</div>
<svg width="10" height="10" viewBox="0 0 10 10" style="position:absolute;left:460.65px;top:341.85px"><rect x="0.6" y="0.6" width="8.3" height="8.3" rx="1.7" fill="#fff" stroke="#74748a" stroke-width="1.2"/></svg><div class="t" style="left:472.5px;top:340.2px">Hide labels</div>
</body></html>
